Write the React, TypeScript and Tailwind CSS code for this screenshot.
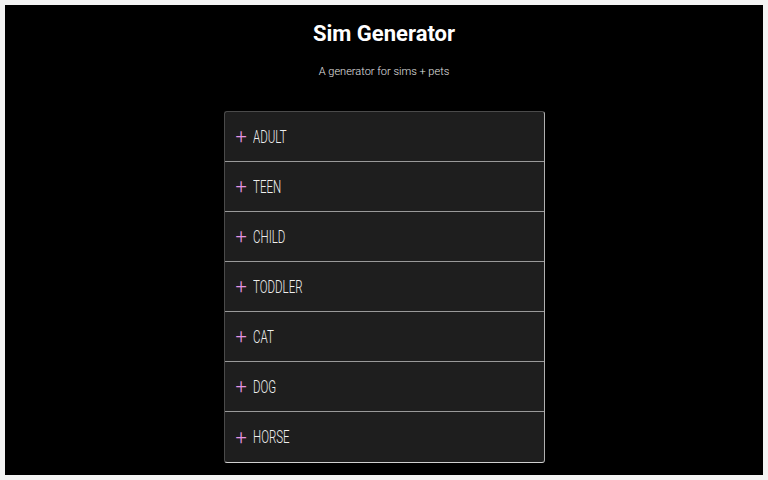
import React from 'react';

const categories = ['ADULT', 'TEEN', 'CHILD', 'TODDLER', 'CAT', 'DOG', 'HORSE'];

function CategoryRow({ label }: { label: string }) {
    return (
        <button className="flex h-[50px] w-full items-center border-b border-[#9a9a9a] px-[11px] text-left last:border-b-0">
            <span className="mr-[6px] text-[20px] leading-none font-light text-[#e694e4]" style={{ fontFamily: 'Roboto, sans-serif' }}>
                +
            </span>
            <span
                className="inline-block origin-left scale-x-[0.64] text-[18px] font-light text-[#f0f0f0]"
                style={{ fontFamily: 'Roboto, sans-serif' }}
            >
                {label}
            </span>
        </button>
    );
}

export default function App() {
    return (
        <div className="h-[480px] w-[768px] bg-[#f4f4f4] p-[5px]">
            <div className="flex h-[470px] w-full flex-col items-center bg-black" style={{ fontFamily: 'Roboto, sans-serif' }}>
                <h1 className="mt-[14px] text-[22px] font-bold leading-[30px] text-white">Sim Generator</h1>
                <p className="mt-[15px] text-[11px] font-light text-[#e4e4e4]">A generator for sims + pets</p>

                {/* Category list */}
                <div className="mt-[30px] w-[321px] overflow-hidden rounded-[3px] border border-[#4a4a4a] border-r-[#b0b0b0] border-b-[#d0d0d0] bg-[#1e1e1e]">
                    {categories.map((c) => (
                        <CategoryRow key={c} label={c} />
                    ))}
                </div>
            </div>
        </div>
    );
}
